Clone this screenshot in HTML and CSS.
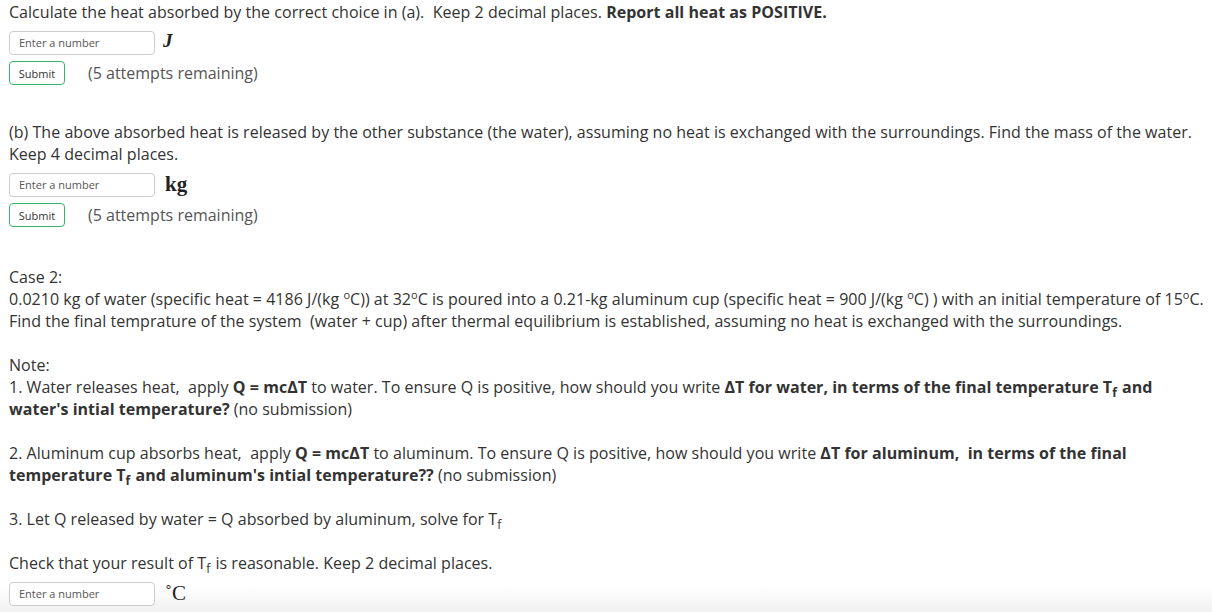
FILE: index.html
```html
<!DOCTYPE html>
<html lang="en">
<head>
<meta charset="utf-8">
<title>Heat problem</title>
<link rel="stylesheet" href="styles.css">
</head>
<body>
<div class="page">
  <p class="line">Calculate the heat absorbed by the correct choice in (a).&nbsp; Keep 2 decimal places. <b>Report all heat as POSITIVE.</b></p>
  <div class="answer">
    <div class="field">Enter a number</div>
    <span class="unit unit-j">J</span>
  </div>
  <div class="submit-row">
    <button class="submit">Submit</button>
    <span class="attempts">(5 attempts remaining)</span>
  </div>

  <p class="line section">(b) The above absorbed heat is released by the other substance (the water), assuming no heat is exchanged with the surroundings. Find the mass of the water.&nbsp; Keep 4 decimal places.</p>
  <div class="answer">
    <div class="field">Enter a number</div>
    <span class="unit unit-kg">kg</span>
  </div>
  <div class="submit-row">
    <button class="submit">Submit</button>
    <span class="attempts">(5 attempts remaining)</span>
  </div>

  <p class="line section case">Case 2:<br>0.0210 kg of water (specific heat = 4186 J/(kg <sup>o</sup>C)) at 32<sup>o</sup>C is poured into a 0.21-kg aluminum cup (specific heat = 900 J/(kg <sup>o</sup>C) ) with an initial temperature of 15<sup>o</sup>C.<br>Find the final temprature of the system&nbsp; (water + cup) after thermal equilibrium is established, assuming no heat is exchanged with the surroundings.</p>

  <p class="line gap">Note:<br>1. Water releases heat,&nbsp; apply <b>Q = mcΔT</b> to water. To ensure Q is positive, how should you write <b>ΔT for water, in terms of the final temperature T<sub>f</sub> and water's intial temperature?</b> (no submission)</p>

  <p class="line gap">2. Aluminum cup absorbs heat,&nbsp; apply <b>Q = mcΔT</b> to aluminum. To ensure Q is positive, how should you write <b>ΔT for aluminum,&nbsp; in terms of the final temperature T<sub>f</sub> and aluminum's intial temperature??</b> (no submission)</p>

  <p class="line gap">3. Let Q released by water = Q absorbed by aluminum, solve for T<sub>f</sub></p>

  <p class="line gap">Check that your result of T<sub>f</sub> is reasonable. Keep 2 decimal places.</p>
  <div class="answer">
    <div class="field">Enter a number</div>
    <span class="unit unit-c">˚C</span>
  </div>
</div>
</body>
</html>
```

FILE: styles.css
```css
html {
  height: 612px;
  background: linear-gradient(to bottom, #ffffff 0, #ffffff 585px, #f1f1f1 612px);
}
body {
  margin: 0;
  font-family: "Open Sans", "DejaVu Sans", sans-serif;
  font-size: 16px;
  line-height: 22px;
  color: #333333;
}
.page {
  padding: 1px 0 0 9px;
}
.line {
  margin: 0;
  letter-spacing: 0.03px;
}
.section {
  margin-top: 36px;
}
.case {
  margin-top: 39px;
}
.gap {
  margin-top: 22px;
}
sup {
  font-size: 11px;
  line-height: 0;
  vertical-align: 6px;
}
sub {
  font-size: 12px;
  line-height: 0;
  vertical-align: -4px;
  margin-right: 1px;
}
.answer {
  display: flex;
  align-items: center;
  margin-top: 8px;
  height: 24px;
}
.field {
  box-sizing: border-box;
  width: 146px;
  height: 24px;
  border: 1px solid #cccccc;
  border-radius: 4px;
  padding-left: 9px;
  font-size: 11px;
  line-height: 22px;
  color: #555555;
  background: #ffffff;
}
.unit {
  font-family: "Liberation Serif", "DejaVu Serif", serif;
  color: #222222;
  margin-left: 9px;
}
.unit-j {
  font-weight: bold;
  font-style: italic;
  font-size: 19px;
  margin-left: 8px;
  margin-top: -4px;
}
.unit-kg {
  font-weight: bold;
  font-size: 21px;
  margin-left: 10px;
  margin-top: -2px;
}
.unit-c {
  font-size: 21px;
  margin-left: 10px;
  margin-top: -2px;
}
.submit-row {
  display: flex;
  align-items: center;
  margin-top: 6px;
  height: 24px;
}
.submit {
  box-sizing: border-box;
  width: 56px;
  height: 24px;
  border: 1px solid #3ab36c;
  border-radius: 4px;
  background: #ffffff;
  font-family: "Open Sans", "DejaVu Sans", sans-serif;
  font-size: 11px;
  color: #333333;
  padding: 0;
}
.attempts {
  margin-left: 23px;
  color: #555555;
}
```
